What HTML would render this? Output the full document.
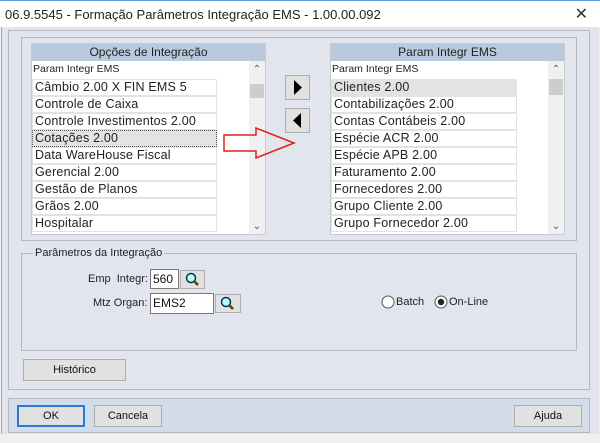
<!DOCTYPE html>
<html><head><meta charset="utf-8"><style>
*{box-sizing:border-box;margin:0;padding:0}
body{width:600px;height:443px;background:#f0f0f0;font-family:"Liberation Sans","DejaVu Sans",sans-serif;position:relative;overflow:hidden}
.a{position:absolute}
.title{left:0;top:0;width:600px;height:27px;background:#fff;border-top:1px solid #5a9ad8;font-size:13px;color:#222;padding:6px 0 0 5px}
.win{left:1px;top:27px;width:598px;height:407px;background:#e2e5ed;border-left:1px solid #9ab;}
.frame{border:1px solid #b5b9c2}
.list{background:#fff;border:1px solid #b5b9c2}
.hdr{height:17px;background:#b9c9de;font-size:12px;text-align:center;line-height:17px;color:#222}
.row{position:absolute;height:17px;border:1px solid #e2e2e2;font-size:12.5px;line-height:15px;padding-left:2px;color:#222;background:#fff;letter-spacing:.2px}
.sb{position:absolute;width:16px;background:#f0f0f0;font-size:10px;color:#555;text-align:center}
.btn{position:absolute;background:#e1e1e1;border:1px solid #adadad;font-size:11px;text-align:center;color:#111}
.inp{position:absolute;background:#fff;border:1px solid #7a7a7a;font-size:12px;padding:2px 2px;color:#111}
.lbl{position:absolute;font-size:11px;color:#222}
</style></head><body>
<div class="a title">06.9.5545 - Formação Parâmetros Integração EMS - 1.00.00.092<span style="position:absolute;right:12px;top:3px;font-size:16px;color:#333">✕</span></div>
<div class="a win"></div>
<div class="a frame" style="left:8px;top:30px;width:582px;height:360px"></div>
<div class="a frame" style="left:21px;top:37px;width:556px;height:204px"></div>

<div class="a list" style="left:31px;top:43px;width:235px;height:192px;border-color:#c8cbd2">
<div class="hdr">Opções de Integração</div></div>
<div class="a" style="left:33px;top:63px;font-size:10.5px;color:#222">Param Integr EMS</div>
<div class="row" style="left:32px;top:79px;width:185px">Câmbio 2.00 X FIN EMS 5</div>
<div class="row" style="left:32px;top:96px;width:185px">Controle de Caixa</div>
<div class="row" style="left:32px;top:113px;width:185px">Controle Investimentos 2.00</div>
<div class="row" style="left:32px;top:130px;width:185px;background:#e3e3e3;border:1px dotted #555">Cotações 2.00</div>
<div class="row" style="left:32px;top:147px;width:185px">Data WareHouse Fiscal</div>
<div class="row" style="left:32px;top:164px;width:185px">Gerencial 2.00</div>
<div class="row" style="left:32px;top:181px;width:185px">Gestão de Planos</div>
<div class="row" style="left:32px;top:198px;width:185px">Grãos 2.00</div>
<div class="row" style="left:32px;top:215px;width:185px">Hospitalar</div>
<div class="sb" style="left:249px;top:61px;height:173px"><div style="margin-top:3px">⌃</div><div style="position:absolute;top:23px;left:1px;width:14px;height:14px;background:#cdcdcd"></div><div style="position:absolute;bottom:2px;width:16px">⌄</div></div>

<div class="list a" style="left:330px;top:43px;width:235px;height:192px;border-color:#c8cbd2">
<div class="hdr">Param Integr EMS</div></div>
<div class="a" style="left:332px;top:63px;font-size:10.5px;color:#222">Param Integr EMS</div>
<div class="row" style="left:331px;top:79px;width:186px;background:#e3e3e3">Clientes 2.00</div>
<div class="row" style="left:331px;top:96px;width:186px">Contabilizações 2.00</div>
<div class="row" style="left:331px;top:113px;width:186px">Contas Contábeis 2.00</div>
<div class="row" style="left:331px;top:130px;width:186px">Espécie ACR 2.00</div>
<div class="row" style="left:331px;top:147px;width:186px">Espécie APB 2.00</div>
<div class="row" style="left:331px;top:164px;width:186px">Faturamento 2.00</div>
<div class="row" style="left:331px;top:181px;width:186px">Fornecedores 2.00</div>
<div class="row" style="left:331px;top:198px;width:186px">Grupo Cliente 2.00</div>
<div class="row" style="left:331px;top:215px;width:186px">Grupo Fornecedor 2.00</div>
<div class="sb" style="left:548px;top:61px;height:173px"><div style="margin-top:3px">⌃</div><div style="position:absolute;top:18px;left:1px;width:14px;height:16px;background:#cdcdcd"></div><div style="position:absolute;bottom:2px;width:16px">⌄</div></div>

<div class="btn" style="left:285px;top:75px;width:25px;height:25px"><svg width="23" height="23"><polygon points="8,4 16,11.5 8,19" fill="#000"/></svg></div>
<div class="btn" style="left:285px;top:108px;width:25px;height:25px"><svg width="23" height="23"><polygon points="15,4 7,11.5 15,19" fill="#000"/></svg></div>
<svg class="a" style="left:220px;top:124px" width="80" height="40"><polygon points="4,11 36,11 36,4 74,19 36,34 36,27 4,27" fill="none" stroke="#e02020" stroke-width="1.5"/></svg>

<div class="a frame" style="left:21px;top:253px;width:556px;height:98px"></div>
<div class="lbl" style="left:33px;top:247px;background:#e2e5ed;padding:0 2px">Parâmetros da Integração</div>
<div class="lbl" style="left:88px;top:273px">Emp &nbsp;Integr:</div>
<div class="inp" style="left:150px;top:269px;width:29px;height:20px">560</div>
<div class="btn" style="left:180px;top:270px;width:25px;height:19px"><svg width="23" height="17"><circle cx="10" cy="7" r="4.5" fill="#bfe" stroke="#036" stroke-width="1.5"/><line x1="13" y1="10" x2="17" y2="14" stroke="#540" stroke-width="2.5"/></svg></div>
<div class="lbl" style="left:93px;top:297px">Mtz Organ:</div>
<div class="inp" style="left:150px;top:293px;width:64px;height:21px">EMS2</div>
<div class="btn" style="left:215px;top:294px;width:26px;height:19px"><svg width="24" height="17"><circle cx="10" cy="7" r="4.5" fill="#bfe" stroke="#036" stroke-width="1.5"/><line x1="13" y1="10" x2="17" y2="14" stroke="#540" stroke-width="2.5"/></svg></div>
<svg class="a" style="left:381px;top:295px" width="14" height="14"><circle cx="7" cy="7" r="6" fill="#fff" stroke="#555"/></svg>
<div class="lbl" style="left:396px;top:296px">Batch</div>
<svg class="a" style="left:434px;top:295px" width="14" height="14"><circle cx="7" cy="7" r="6" fill="#fff" stroke="#555"/><circle cx="7" cy="7" r="3.2" fill="#222"/></svg>
<div class="lbl" style="left:449px;top:296px">On-Line</div>

<div class="btn" style="left:23px;top:359px;width:103px;height:22px;line-height:20px">Histórico</div>

<div class="a" style="left:8px;top:398px;width:582px;height:35px;background:#d3dcea;border:1px solid #b5b9c2"></div>
<div class="btn" style="left:17px;top:405px;width:68px;height:22px;line-height:19px;border:2px solid #2b7bd0">OK</div>
<div class="btn" style="left:94px;top:405px;width:68px;height:22px;line-height:20px">Cancela</div>
<div class="btn" style="left:514px;top:405px;width:68px;height:22px;line-height:20px">Ajuda</div>
</body></html>
